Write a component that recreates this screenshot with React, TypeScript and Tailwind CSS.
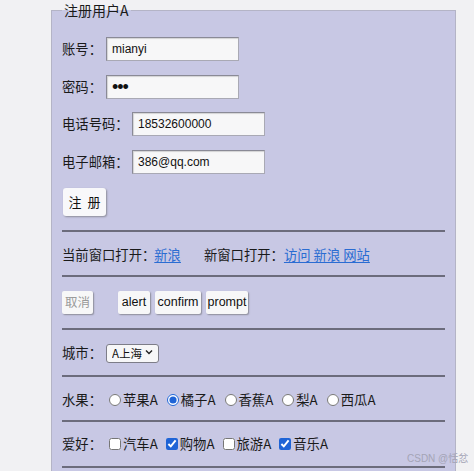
import { useState } from "react";

const cjk = { fontFamily: '"Noto Sans CJK SC", "Noto Sans", sans-serif' };
const latin = { fontFamily: '"Liberation Sans", "Noto Sans CJK SC", sans-serif' };

function Rule({ className }: { className: string }) {
  return <div className={`h-[2px] w-full bg-[#6c6c7c] ${className}`} />;
}

function TextBox({ value, type = "text" }: { value: string; type?: string }) {
  return (
    <input
      type={type}
      defaultValue={value}
      readOnly
      style={latin}
      className={`h-[24px] w-[133px] shrink-0 border border-[#a9a9b4] border-t-[#8a8a96] border-l-[#8a8a96] bg-[#f7f7f8] px-[5px] text-[#111] shadow-[inset_1px_1px_1px_rgba(0,0,0,0.15)] outline-none ${type === "password" ? "text-[18px] tracking-[-1px]" : "text-[12px]"}`}
    />
  );
}

function PlainButton({ label, width, muted }: { label: string; width: string; muted?: boolean }) {
  return (
    <button
      type="button"
      className={`${width} h-[23px] shrink-0 rounded-[2px] bg-[#f7f7f8] text-[12.5px] shadow-[1px_1px_1.5px_#8c8c99] ${muted ? "text-[#9a9a9a]" : "text-[#111]"}`}
    >
      {label}
    </button>
  );
}

export default function App() {
  const [fruit, setFruit] = useState("橘子A");
  const [hobbies, setHobbies] = useState<string[]>(["购物A", "音乐A"]);

  const toggle = (h: string) =>
    setHobbies((prev) => (prev.includes(h) ? prev.filter((x) => x !== h) : [...prev, h]));

  return (
    <div className="relative h-[471px] w-[474px] overflow-hidden bg-[#f1f1f3] pl-[51px]" style={cjk}>
      <fieldset className="w-[405px] border border-[#b4b4c6] bg-[#c8c8e4] px-[10px] pb-[10px] text-[13.33px] text-[#1a1a1a]">
        <legend className="px-[2px] text-[14px] leading-[20px] text-[#1a1a1a]">注册用户A</legend>

        <div className="mt-[17px] flex items-center">
          <span className="w-[44px] shrink-0 whitespace-nowrap">账号：</span>
          <TextBox value="mianyi" />
        </div>
        <div className="mt-[14px] flex items-center">
          <span className="w-[44px] shrink-0 whitespace-nowrap">密码：</span>
          <TextBox value="abc" type="password" />
        </div>
        <div className="mt-[13px] flex items-center">
          <span className="w-[70px] shrink-0 whitespace-nowrap">电话号码：</span>
          <TextBox value="18532600000" />
        </div>
        <div className="mt-[14px] flex items-center">
          <span className="w-[70px] shrink-0 whitespace-nowrap">电子邮箱：</span>
          <TextBox value="386@qq.com" />
        </div>

        <button
          type="button"
          className="mt-[14px] ml-[1px] h-[28px] w-[43px] rounded-[3px] bg-[#f8f8fa] text-[13px] text-[#111] shadow-[1px_1px_2px_#8c8c99]"
        >
          注&nbsp;&nbsp;册
        </button>

        <Rule className="mt-[14px]" />

        <div className="mt-[13px] flex h-[20px] items-center whitespace-pre">
          <span>当前窗口打开：</span>
          <a href="#" className="-ml-[1px] text-[#2a6cd2] underline underline-offset-2">新浪</a>
          <span className="ml-[23px]">新窗口打开：</span>
          <a href="#" className="text-[#2a6cd2] underline underline-offset-2">访问 新浪 网站</a>
        </div>

        <Rule className="mt-[10px]" />

        <div className="mt-[14px] flex items-center">
          <PlainButton label="取消" width="w-[31px]" muted />
          <div className="ml-[25px] flex gap-[5px]" style={latin}>
            <PlainButton label="alert" width="w-[32px]" />
            <PlainButton label="confirm" width="w-[46px]" />
            <PlainButton label="prompt" width="w-[42px]" />
          </div>
        </div>

        <Rule className="mt-[14px]" />

        <div className="mt-[13px] flex h-[20px] items-center">
          <span className="w-[44px] shrink-0 whitespace-nowrap">城市：</span>
          <div className="relative">
            <select
              defaultValue="sh"
              className="h-[19px] w-[53px] appearance-none rounded-[3px] border border-[#7d7d88] bg-[#f7f7f8] pl-[5px] text-[11.5px] text-[#111] outline-none"
            >
              <option value="sh">A上海</option>
              <option value="bj">A北京</option>
            </select>
            <svg
              className="pointer-events-none absolute right-[6px] top-[6px]"
              width="8"
              height="6"
              viewBox="0 0 8 6"
              fill="none"
              stroke="#222"
              strokeWidth="1.4"
            >
              <path d="M1 1.5 L4 4.5 L7 1.5" />
            </svg>
          </div>
        </div>

        <Rule className="mt-[12px]" />

        <div className="mt-[13px] flex h-[20px] items-center whitespace-nowrap">
          <span className="w-[47px] shrink-0">水果：</span>
          {["苹果A", "橘子A", "香蕉A", "梨A", "西瓜A"].map((f, i) => (
            <label key={f} className={`flex shrink-0 items-center ${i === 0 ? "" : "ml-[9px]"}`}>
              <input
                type="radio"
                name="fruit"
                checked={fruit === f}
                onChange={() => setFruit(f)}
                className="m-0 h-[12px] w-[12px] accent-[#1f64d6]"
              />
              <span className="ml-[2px]">{f}</span>
            </label>
          ))}
        </div>

        <Rule className="mt-[10px]" />

        <div className="mt-[12px] flex h-[20px] items-center whitespace-nowrap">
          <span className="w-[47px] shrink-0">爱好：</span>
          {["汽车A", "购物A", "旅游A", "音乐A"].map((h, i) => (
            <label key={h} className={`flex shrink-0 items-center ${i === 0 ? "" : "ml-[8px]"}`}>
              <input
                type="checkbox"
                checked={hobbies.includes(h)}
                onChange={() => toggle(h)}
                className="m-0 h-[12px] w-[12px] accent-[#1f64d6]"
              />
              <span className="ml-[2px]">{h}</span>
            </label>
          ))}
        </div>

        <Rule className="mt-[12px]" />
      </fieldset>

      <span
        className="absolute left-[407px] top-[451px] text-[10px] text-[#a4a4b6]"
        style={{ fontFamily: '"Liberation Sans", "Noto Sans CJK SC", sans-serif' }}
      >
        CSDN @恬忿
      </span>
    </div>
  );
}
